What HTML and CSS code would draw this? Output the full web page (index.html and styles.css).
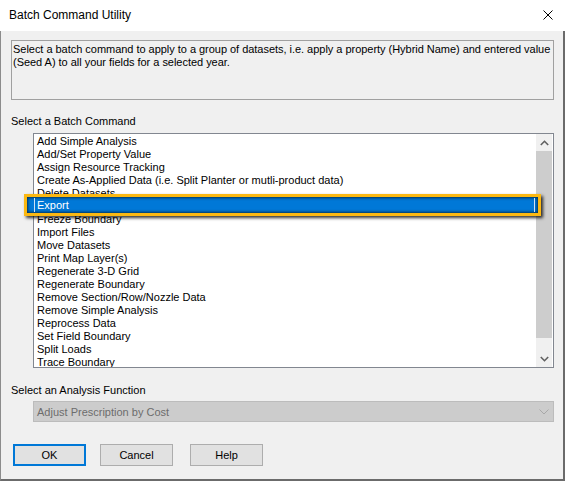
FILE: index.html
```html
<!DOCTYPE html>
<html>
<head>
<meta charset="utf-8">
<link rel="stylesheet" href="styles.css">
</head>
<body>
<div class="window">
  <div class="titlebar">
    <span class="title">Batch Command Utility</span>
    <svg class="close" width="10" height="10" viewBox="0 0 10 10"><path d="M0.5 0.5 L9.5 9.5 M9.5 0.5 L0.5 9.5" stroke="#000" stroke-width="1" fill="none"/></svg>
  </div>
  <div class="client">
    <div class="desc">Select a batch command to apply to a group of datasets, i.e. apply a property (Hybrid Name) and entered value<br>(Seed A) to all your fields for a selected year.</div>
    <div class="label label-cmd">Select a Batch Command</div>
    <div class="listbox">
      <ul class="items">
        <li>Add Simple Analysis</li>
        <li>Add/Set Property Value</li>
        <li>Assign Resource Tracking</li>
        <li>Create As-Applied Data (i.e. Split Planter or mutli-product data)</li>
        <li>Delete Datasets</li>
        <li>Export</li>
        <li>Freeze Boundary</li>
        <li>Import Files</li>
        <li>Move Datasets</li>
        <li>Print Map Layer(s)</li>
        <li>Regenerate 3-D Grid</li>
        <li>Regenerate Boundary</li>
        <li>Remove Section/Row/Nozzle Data</li>
        <li>Remove Simple Analysis</li>
        <li>Reprocess Data</li>
        <li>Set Field Boundary</li>
        <li>Split Loads</li>
        <li>Trace Boundary</li>
      </ul>
      <div class="scrollbar">
        <div class="sb-btn"><svg width="9" height="6" viewBox="0 0 9 6"><path d="M0.8 5 L4.5 1.3 L8.2 5" stroke="#606060" stroke-width="1.6" fill="none"/></svg></div>
        <div class="sb-thumb"></div>
        <div class="sb-track"></div>
        <div class="sb-btn"><svg width="9" height="6" viewBox="0 0 9 6"><path d="M0.8 1 L4.5 4.7 L8.2 1" stroke="#606060" stroke-width="1.6" fill="none"/></svg></div>
      </div>
    </div>
    <div class="label label-fn">Select an Analysis Function</div>
    <div class="combo">
      <span>Adjust Prescription by Cost</span>
      <svg width="10" height="6" viewBox="0 0 10 6"><path d="M0.5 0.5 L5 5 L9.5 0.5" stroke="#a8a8a8" stroke-width="1" fill="none"/></svg>
    </div>
    <div class="buttons">
      <button class="btn btn-default">OK</button>
      <button class="btn btn-cancel">Cancel</button>
      <button class="btn btn-help">Help</button>
    </div>
  </div>
  <div class="callout"><span class="callout-text">Export</span></div>
</div>
</body>
</html>
```
FILE: styles.css
```css
html, body {
  margin: 0;
  padding: 0;
  background: #ffffff;
}
body {
  font-family: "Liberation Sans", Arial, sans-serif;
  font-size: 11px;
  color: #000;
}
.window {
  position: relative;
  width: 565px;
  height: 481px;
  display: flex;
  flex-direction: column;
  overflow: hidden;
}
.titlebar {
  height: 31px;
  flex: none;
  background: #ffffff;
  display: flex;
  align-items: center;
  justify-content: space-between;
  padding: 0 12px 0 9px;
  box-sizing: border-box;
}
.title {
  font-size: 12px;
  color: #000;
  margin-top: -1px;
}
.close {
  display: block;
  margin-top: -2px;
}
.client {
  flex: 1;
  background: #f0f0f0;
  border-left: 1px solid #8c8c8c;
  border-right: 2px solid #6b6b6b;
  border-bottom: 2px solid #6b6b6b;
  padding-left: 10px;
  display: flex;
  flex-direction: column;
  align-items: flex-start;
}
.desc {
  margin-top: 9px;
  width: 543px;
  height: 60px;
  box-sizing: border-box;
  border: 1px solid #a0a0a0;
  background: #f0f0f0;
  padding: 2px 0 0 1px;
  line-height: 13px;
  letter-spacing: -0.03px;
  white-space: nowrap;
  overflow: hidden;
}
.label {
  line-height: 13px;
  height: 13px;
}
.label-cmd {
  margin-top: 15px;
}
.listbox {
  margin-top: 5px;
  margin-left: 22px;
  width: 521px;
  height: 235px;
  box-sizing: border-box;
  border: 1px solid #828790;
  background: #ffffff;
  display: flex;
}
.items {
  flex: 1;
  margin: 0;
  padding: 1px 0 0 0;
  list-style: none;
  overflow: hidden;
}
.items li {
  height: 13px;
  line-height: 13px;
  padding-left: 3px;
  white-space: nowrap;
}
.scrollbar {
  width: 16px;
  margin-right: 1px;
  display: flex;
  flex-direction: column;
  background: #f0f0f0;
}
.sb-btn {
  height: 17px;
  display: flex;
  align-items: center;
  justify-content: center;
}
.sb-thumb {
  height: 187px;
  background: #cdcdcd;
}
.sb-track {
  flex: 1;
}
.label-fn {
  margin-top: 16px;
}
.combo {
  margin-top: 4px;
  margin-left: 22px;
  width: 521px;
  height: 21px;
  box-sizing: border-box;
  border: 1px solid #bcbcbc;
  background: #cccccc;
  color: #6d6d6d;
  display: flex;
  align-items: center;
  justify-content: space-between;
  padding: 0 4px 0 3px;
}
.buttons {
  margin-top: 22px;
  margin-left: 2px;
  display: flex;
}
.btn {
  width: 73px;
  height: 22px;
  box-sizing: border-box;
  border: 1px solid #adadad;
  background: #e1e1e1;
  font-family: "Liberation Sans", Arial, sans-serif;
  font-size: 11px;
  color: #000;
  padding: 0;
  margin: 0;
}
.btn-default {
  border: 2px solid #0078d7;
}
.btn-cancel {
  margin-left: 14px;
}
.btn-help {
  margin-left: 17px;
}
.callout {
  position: absolute;
  left: 24px;
  top: 194px;
  width: 517px;
  height: 22px;
  box-sizing: border-box;
  border: 3px solid #fbb812;
  background: #0078d7;
  box-shadow: 2px 2px 3px rgba(0, 0, 0, 0.8), inset 0 0 3px 1px rgba(0, 0, 0, 0.6);
  display: flex;
}
.callout-text {
  margin: 1px 3px 1px 7px;
  flex: 1;
  border-left: 1px solid #cfe2f5;
  border-right: 1px solid #cfe2f5;
  padding-left: 2px;
  padding-top: 1px;
  color: #ffffff;
  line-height: 13px;
}
```
